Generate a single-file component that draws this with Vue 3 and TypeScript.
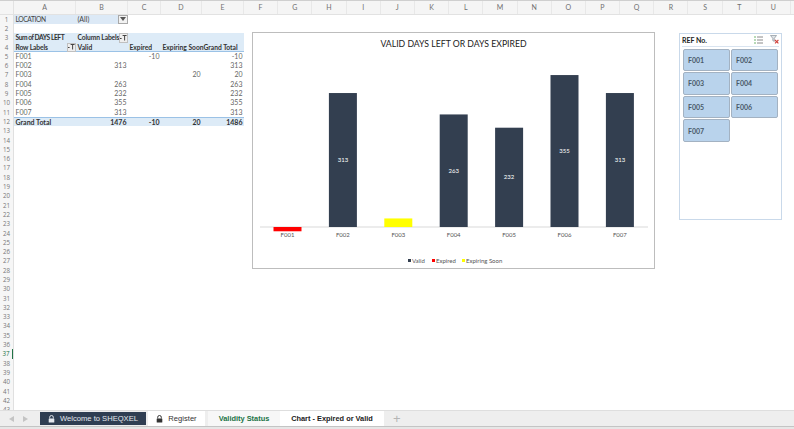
<script setup lang="ts">
const columns = ['A', 'B', 'C', 'D', 'E', 'F', 'G', 'H', 'I', 'J', 'K', 'L', 'M', 'N', 'O', 'P', 'Q', 'R', 'S', 'T', 'U']
const rowNumbers = Array.from({ length: 43 }, (_, i) => i + 1)
const pivotRows = [
  ['F001', '', '-10', '', '-10'],
  ['F002', '313', '', '', '313'],
  ['F003', '', '', '20', '20'],
  ['F004', '263', '', '', '263'],
  ['F005', '232', '', '', '232'],
  ['F006', '355', '', '', '355'],
  ['F007', '313', '', '', '313']
]
const grandTotal = ['Grand Total', '1476', '-10', '20', '1486']

const BASE = 195
const SCALE = 0.428
const bars = [
  { name: 'F001', value: -10, color: '#ff0000', label: false },
  { name: 'F002', value: 313, color: '#333f50', label: true },
  { name: 'F003', value: 20, color: '#ffff00', label: false },
  { name: 'F004', value: 263, color: '#333f50', label: true },
  { name: 'F005', value: 232, color: '#333f50', label: true },
  { name: 'F006', value: 355, color: '#333f50', label: true },
  { name: 'F007', value: 313, color: '#333f50', label: true }
].map((bar, i) => {
  const h = Math.abs(bar.value) * SCALE
  return {
    ...bar,
    x: 21.5 + i * 55.4,
    h,
    y: bar.value >= 0 ? BASE - h : BASE,
    cx: 35.5 + i * 55.4
  }
})
const legend = [
  { x: 156, label: 'Valid', color: '#333f50', tx: 160 },
  { x: 180, label: 'Expired', color: '#ff0000', tx: 184 },
  { x: 210, label: 'Expiring Soon', color: '#ffff00', tx: 214 }
]
const slicerItems = ['F001', 'F002', 'F003', 'F004', 'F005', 'F006', 'F007']
</script>

<template>
  <div class="excel">
    <div class="col-header">
      <div class="corner"></div>
      <div v-for="c in columns" :key="c" class="col-cell">{{ c }}</div>
      <div class="col-rest"></div>
    </div>

    <div class="body">
      <div class="row-numbers">
        <div v-for="n in rowNumbers" :key="n" class="row-no" :class="{ active: n === 37 }">{{ n }}</div>
      </div>

      <div class="sheet">
        <div class="pivot">
          <div class="p-row filter-row">
            <div class="fill-span caps">LOCATION</div>
            <div class="fill-span all">
              (All)
              <span class="drop-btn"><svg width="6" height="4" viewBox="0 0 6 4"><path d="M0 0h6L3 4z" fill="#555" /></svg></span>
            </div>
          </div>
          <div class="p-row"></div>
          <div class="p-row head-top">
            <div class="bold caps">Sum of DAYS LEFT</div>
            <div class="bold labels">
              Column Labels
              <span class="filter-btn"><svg width="7" height="6" viewBox="0 0 7 6"><path d="M0 3.5h1.6M2.6.5h4M4.6.5v5" stroke="#444" fill="none" /></svg></span>
            </div>
            <div></div><div></div><div></div>
          </div>
          <div class="p-row head-bottom">
            <div class="bold labels">
              Row Labels
              <span class="filter-btn"><svg width="7" height="6" viewBox="0 0 7 6"><path d="M0 3.5h1.6M2.6.5h4M4.6.5v5" stroke="#444" fill="none" /></svg></span>
            </div>
            <div class="bold">Valid</div>
            <div class="bold">Expired</div>
            <div class="bold">Expiring Soon</div>
            <div class="bold">Grand Total</div>
          </div>
          <div v-for="row in pivotRows" :key="row[0]" class="p-row data">
            <div>{{ row[0] }}</div>
            <div v-for="(v, i) in row.slice(1)" :key="i" class="num">{{ v }}</div>
          </div>
          <div class="p-row total">
            <div>{{ grandTotal[0] }}</div>
            <div v-for="(v, i) in grandTotal.slice(1)" :key="i" class="num">{{ v }}</div>
          </div>
        </div>

        <div class="chart">
          <svg width="401" height="235" viewBox="1 1 401 235">
            <text x="201.5" y="14.5" class="title" text-anchor="middle">VALID DAYS LEFT OR DAYS EXPIRED</text>
            <line x1="8" x2="396" y1="195" y2="195" stroke="#d9d9d9" />
            <g v-for="b in bars" :key="b.name">
              <rect :x="b.x" :y="b.y" width="28" :height="b.h" :fill="b.color" />
              <text v-if="b.label" :x="b.cx" :y="b.y + b.h / 2 + 2" class="bar-label" text-anchor="middle">{{ b.value }}</text>
              <text :x="b.cx" y="204.5" class="axis" text-anchor="middle">{{ b.name }}</text>
            </g>
            <g v-for="l in legend" :key="l.label">
              <rect :x="l.x" y="227" width="3" height="3" :fill="l.color" />
              <text :x="l.tx" y="230.5" class="axis">{{ l.label }}</text>
            </g>
          </svg>
        </div>

        <div class="slicer">
          <div class="slicer-head">
            <span class="slicer-title">REF No.</span>
            <span class="slicer-icons">
              <svg width="9" height="8" viewBox="0 0 9 8">
                <path d="M3 1h6M3 4h6M3 7h6" stroke="#8a8a8a" fill="none" />
                <path d="M0 1h2M0 4h2M0 7h2" stroke="#6fb56f" fill="none" />
              </svg>
              <svg width="9" height="9" viewBox="0 0 9 9">
                <path d="M0.5 0.5h6L4.3 3.4v3L2.8 5.6V3.4z" fill="#dfe3e7" stroke="#8a929a" stroke-width=".7" />
                <path d="M5 5l3.4 3.4M8.4 5L5 8.4" stroke="#d0403a" stroke-width="1.1" fill="none" />
              </svg>
            </span>
          </div>
          <div class="slicer-grid">
            <div v-for="s in slicerItems" :key="s" class="slicer-btn">{{ s }}</div>
          </div>
        </div>
      </div>
    </div>

    <div class="tabbar">
      <div class="nav">
        <svg width="5" height="6" viewBox="0 0 5 6"><path d="M5 0v6L0 3z" fill="#c4c4c4" /></svg>
        <svg width="5" height="6" viewBox="0 0 5 6"><path d="M0 0v6l5-3z" fill="#c4c4c4" /></svg>
      </div>
      <div class="tab dark">
        <svg class="lock" width="7" height="8" viewBox="0 0 7 8"><path d="M1.7 3.5V2.3a1.8 1.8 0 0 1 3.6 0v1.2" stroke="currentColor" fill="none" /><rect x=".7" y="3.4" width="5.6" height="4.2" rx=".5" fill="currentColor" /></svg>
        Welcome to SHEQXEL
      </div>
      <div class="tab register">
        <svg class="lock" width="7" height="8" viewBox="0 0 7 8"><path d="M1.7 3.5V2.3a1.8 1.8 0 0 1 3.6 0v1.2" stroke="currentColor" fill="none" /><rect x=".7" y="3.4" width="5.6" height="4.2" rx=".5" fill="currentColor" /></svg>
        Register
      </div>
      <div class="tab validity">Validity Status</div>
      <div class="tab current">Chart - Expired or Valid</div>
      <div class="plus">+</div>
    </div>
    <div class="foot"></div>
  </div>
</template>

<style scoped>
.excel {
  width: 794px;
  height: 429px;
  overflow: hidden;
  display: flex;
  flex-direction: column;
  background: #fff;
  font-family: Lato, "Open Sans", sans-serif;
  color: #444;
}
.col-header {
  flex: 0 0 14.7px;
  display: grid;
  grid-template-columns: 14px 62px 52px 33px 41px 42px repeat(16, 34.2px) 1fr;
  background: #f5f5f5;
  border-top: 1px solid #cfcfcf;
  box-sizing: border-box;
  border-bottom: 1px solid #e2e2e2;
}
.corner {
  border-right: 1px solid #e2e2e2;
}
.col-cell {
  display: flex;
  align-items: center;
  justify-content: center;
  font-size: 7px;
  color: #707070;
  border-right: 1px solid #e8e8e8;
}
.body {
  flex: 1;
  min-height: 0;
  display: flex;
  overflow: hidden;
}
.row-numbers {
  flex: 0 0 14px;
  box-sizing: border-box;
  background: #f6f6f6;
  border-right: 1px solid #e0e0e0;
}
.row-no {
  height: 9.3px;
  line-height: 9.3px;
  font-family: "Open Sans", sans-serif;
  font-size: 6.2px;
  color: #777;
  text-align: center;
}
.row-no.active {
  color: #217346;
  border-right: 1px solid #217346;
}
.sheet {
  flex: 1;
  position: relative;
}
.pivot {
  width: 230px;
}
.p-row {
  display: grid;
  grid-template-columns: 62px 52px 33px 41px 42px;
  height: 9.3px;
  line-height: 9.3px;
  font-size: 7px;
  box-sizing: border-box;
}
.p-row > div {
  padding: 0 1.5px;
  white-space: nowrap;
  position: relative;
}
.filter-row > .fill-span {
  background: #dce9f6;
  color: #444;
}
.filter-row > .caps {
  font-size: 6.7px;
  letter-spacing: -0.4px;
}
.all {
  display: flex;
  justify-content: space-between;
  padding-right: 0 !important;
}
.drop-btn {
  width: 10px;
  height: 9.3px;
  box-sizing: border-box;
  background: #f2f2f2;
  border: 1px solid #a8a8a8;
  display: flex;
  align-items: center;
  justify-content: center;
}
.filter-btn {
  position: absolute;
  right: 0;
  top: 0;
  width: 9px;
  height: 9.3px;
  box-sizing: border-box;
  background: #efefef;
  border: 1px solid #c0c0c0;
  display: flex;
  align-items: center;
  justify-content: center;
}
.head-top,
.head-bottom {
  background: #ddebf7;
}
.head-bottom {
  border-bottom: 1px solid #9bc2e6;
}
.bold {
  font-weight: 700;
  font-size: 6.7px;
  color: #333;
}
.bold.caps {
  font-size: 6.7px;
  letter-spacing: -0.45px;
}
.bold.labels {
  letter-spacing: -0.12px;
}
.data {
  color: #666;
}
.num {
  text-align: right;
}
.total {
  background: #ddebf7;
  border-top: 1px solid #9bc2e6;
  font-weight: 700;
  color: #333;
  line-height: 8.3px;
}
.chart {
  position: absolute;
  left: 238px;
  top: 17.3px;
  width: 403px;
  height: 237px;
  box-sizing: border-box;
  background: #fff;
  border: 1px solid #bdbdbd;
}
.chart svg {
  display: block;
  font-family: Lato, "Open Sans", sans-serif;
}
.title {
  font-size: 8.7px;
  fill: #222;
}
.axis {
  font-size: 6px;
  fill: #555;
}
.bar-label {
  font-size: 6px;
  fill: #fff;
}
.slicer {
  position: absolute;
  left: 665px;
  top: 18px;
  width: 103px;
  height: 187px;
  box-sizing: border-box;
  background: #fff;
  border: 1px solid #c9d9ea;
  padding: 0 3px;
}
.slicer-head {
  height: 12.5px;
  margin: 0 -1px;
  display: flex;
  align-items: center;
  justify-content: space-between;
  border-bottom: 1px solid #d9e4f0;
}
.slicer-title {
  font-size: 7px;
  font-weight: 700;
  color: #222;
}
.slicer-icons {
  display: flex;
  gap: 7px;
  align-items: center;
}
.slicer-grid {
  margin-top: 1.5px;
  display: grid;
  grid-template-columns: 46.5px 46.5px;
  grid-auto-rows: 22.3px;
  gap: 1.3px 1.5px;
}
.slicer-btn {
  background: #b9d3ec;
  border: 1px solid #a3b2c2;
  border-radius: 2px;
  box-sizing: border-box;
  font-size: 7px;
  font-weight: 700;
  color: #4a5a6a;
  display: flex;
  align-items: center;
  padding-left: 4px;
}
.tabbar {
  flex: 0 0 17px;
  box-sizing: border-box;
  background: #eeeeee;
  border-top: 1px solid #dedede;
  border-bottom: 1px solid #c4c4c4;
  display: flex;
  align-items: center;
  font-family: "Liberation Sans", Arial, sans-serif;
  font-size: 7.6px;
}
.foot {
  flex: 0 0 2px;
  background: #e6e6e6;
}
.nav {
  width: 40px;
  display: flex;
  gap: 9px;
  box-sizing: border-box;
  padding-left: 9px;
}
.tab {
  height: 100%;
  display: flex;
  align-items: center;
  justify-content: center;
  gap: 5px;
  white-space: nowrap;
  box-sizing: border-box;
}
.dark {
  width: 106px;
  height: 13px;
  background: #2f3e52;
  color: #e4e8ee;
}
.register {
  width: 57px;
  margin-left: 2px;
  background: #fff;
  color: #333;
}
.validity {
  width: 72px;
  margin-left: 3px;
  color: #217346;
  font-weight: 700;
  font-size: 7.4px;
  background: #f7f7f7;
}
.current {
  width: 104px;
  background: #fff;
  color: #222;
  font-weight: 700;
  font-size: 7.4px;
}
.lock {
  flex: none;
}
.plus {
  margin-left: 9px;
  font-size: 13px;
  color: #b5b5b5;
}
</style>

<style>
html, body {
  margin: 0;
  padding: 0;
  background: #fff;
}
</style>
